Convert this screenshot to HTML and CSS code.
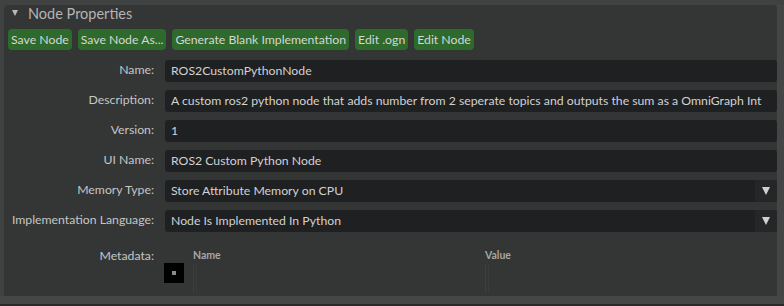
FILE: index.html
```html
<!DOCTYPE html>
<html>
<head>
<meta charset="utf-8">
<link rel="stylesheet" href="styles.css">
</head>
<body>
<div class="frame">
  <div class="panel">
    <div class="header">
      <span class="tri"></span>
      <span class="title">Node Properties</span>
    </div>
    <div class="buttons">
      <span class="btn">Save Node</span>
      <span class="btn">Save Node As...</span>
      <span class="btn">Generate Blank Implementation</span>
      <span class="btn">Edit .ogn</span>
      <span class="btn">Edit Node</span>
    </div>
    <div class="rows">
      <div class="row"><div class="label">Name:</div><div class="field">ROS2CustomPythonNode</div></div>
      <div class="row"><div class="label">Description:</div><div class="field">A custom ros2 python node that adds number from 2 seperate topics and outputs the sum as a OmniGraph Int</div></div>
      <div class="row"><div class="label">Version:</div><div class="field">1</div></div>
      <div class="row"><div class="label">UI Name:</div><div class="field">ROS2 Custom Python Node</div></div>
      <div class="row"><div class="label">Memory Type:</div><div class="field combo"><span class="ctext">Store Attribute Memory on CPU</span><span class="arrow"></span></div></div>
      <div class="row"><div class="label">Implementation Language:</div><div class="field combo"><span class="ctext">Node Is Implemented In Python</span><span class="arrow"></span></div></div>
    </div>
    <div class="meta">
      <div class="label mlabel">Metadata:</div>
      <div class="mbody">
        <div class="addbox"><span class="dot"></span></div>
        <div class="col cname"><div class="chead">Name</div></div>
        <div class="col cvalue"><div class="chead">Value</div></div>
      </div>
    </div>
  </div>
  <div class="scroll"></div>
</div>
<div class="bottom"></div>
</body>
</html>
```
FILE: styles.css
```css
html, body {
  margin: 0;
  padding: 0;
}
body {
  width: 784px;
  height: 306px;
  background: #2a2a2a;
  font-family: Lato, "Noto Sans", sans-serif;
  font-size: 12.25px;
  overflow: hidden;
}
.frame {
  display: flex;
  height: 296px;
  background: #404141;
  padding: 5px 0 0 4px;
  box-sizing: border-box;
}
.panel {
  width: 773px;
  height: 291px;
  background: #343535;
  border-radius: 4px 4px 0 0;
  box-sizing: border-box;
  overflow: hidden;
}
.scroll {
  width: 7px;
  background: #444545;
}
.bottom {
  height: 8px;
  background: #454646;
}
.header {
  height: 17px;
  display: flex;
  align-items: center;
  padding-left: 8px;
}
.tri {
  width: 0;
  height: 0;
  border-left: 3.5px solid transparent;
  border-right: 3.5px solid transparent;
  border-top: 6px solid #b8b8b8;
  margin-right: 10px;
  margin-top: -1px;
}
.title {
  color: #b4b4b4;
  font-size: 14.5px;
}
.buttons {
  display: flex;
  gap: 6px;
  padding: 7px 0 0 4px;
  height: 21px;
}
.btn {
  background: #2d6a2c;
  color: #d6d6d6;
  border-radius: 4px;
  height: 21px;
  line-height: 21px;
  padding: 0 3px;
  white-space: nowrap;
}
.rows {
  padding-top: 10px;
  display: flex;
  flex-direction: column;
  gap: 8px;
}
.row {
  display: flex;
  align-items: center;
  height: 22px;
}
.label {
  width: 161px;
  flex: none;
  text-align: right;
  color: #c6c6c6;
  white-space: nowrap;
  padding-right: 11px;
  box-sizing: border-box;
  margin-top: -3px;
}
.field {
  flex: 1;
  height: 22px;
  line-height: 22px;
  background: #1f2022;
  color: #d2d2d2;
  border-radius: 3px;
  padding-left: 6px;
  white-space: nowrap;
  overflow: hidden;
}
.combo {
  display: flex;
  padding-right: 0;
}
.ctext {
  flex: 1;
}
.arrow {
  width: 22px;
  background: #252628;
  position: relative;
}
.arrow::after {
  content: "";
  position: absolute;
  left: 7px;
  top: 7px;
  border-left: 4.5px solid transparent;
  border-right: 4.5px solid transparent;
  border-top: 8px solid #d0d0d0;
}
.meta {
  display: flex;
  padding-top: 16px;
  height: 45px;
}
.mlabel {
  margin-top: 0;
  height: 15px;
  line-height: 15px;
}
.mbody {
  flex: 1;
  display: flex;
}
.addbox {
  width: 20px;
  height: 20px;
  background: #000;
  margin-top: 15px;
  margin-left: -1px;
  display: flex;
  align-items: center;
  justify-content: center;
}
.dot {
  width: 4px;
  height: 4px;
  background: #8a8a8a;
}
.col {
  border-left: 1px solid #3d3e3e;
  box-shadow: inset 2px 0 0 #343535, inset 3px 0 0 #3a3b3b;
}
.cname {
  margin-left: 9px;
  width: 291px;
}
.cvalue {
  flex: 1;
}
.chead {
  font-size: 10.5px;
  font-weight: bold;
  color: #a6a6a6;
  margin-left: -1px;
  height: 16px;
  line-height: 14px;
  background: #343535;
}
```
